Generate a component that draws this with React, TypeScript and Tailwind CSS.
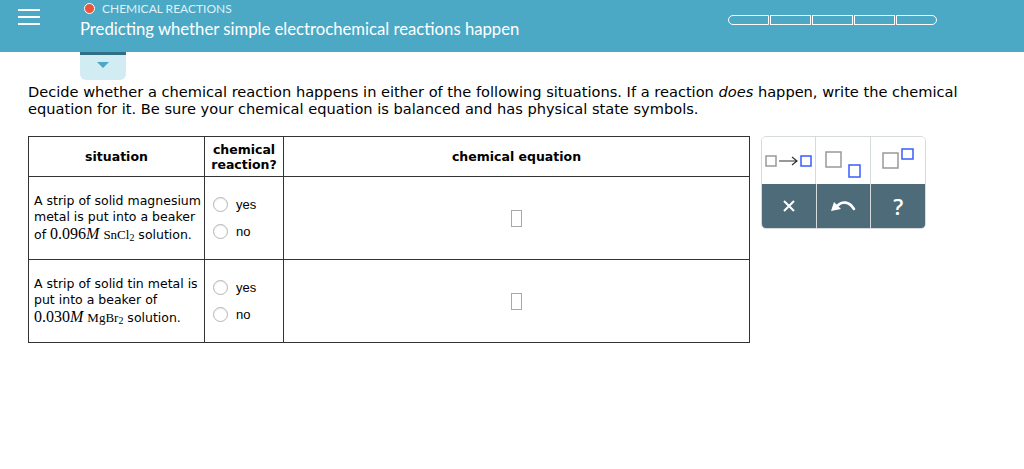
import React from "react";

const verdana = { fontFamily: '"DejaVu Sans", Verdana, sans-serif' };
const serif = { fontFamily: '"Liberation Serif", "Times New Roman", serif' };

function Radio({ label }: { label: string }) {
  return (
    <div className="flex items-center gap-[8px]">
      <span className="h-[15px] w-[15px] rounded-full border border-[#b5b5b5] bg-white shadow-[inset_0_1px_1px_rgba(0,0,0,0.08)]" />
      <span className="text-[13px] leading-[15px] text-black" style={{ fontFamily: '"Liberation Sans", Arial, sans-serif' }}>
        {label}
      </span>
    </div>
  );
}

function Amount({ value, formula, sub }: { value: string; formula: string; sub: string; }) {
  return (
    <span style={serif} className="text-[16px]">
      {value}
      <i>M</i>{" "}
      <span className="text-[13px]">
        {formula}
        <sub className="text-[10px]">{sub}</sub>
      </span>
    </span>
  );
}

function SlotBox() {
  return <span className="block h-[17px] w-[11px] border-[1.5px] border-[#a8a8a8]" />;
}

function Row({ children }: { children: React.ReactNode }) {
  return (
    <tr className="h-[83px]">
      <td className="border-[1.5px] border-[#333] pl-[5px] pr-0 align-middle text-[12.5px] leading-[16.5px] text-black">{children}</td>
      <td className="border-[1.5px] border-[#333] px-[8px]">
        <div className="flex flex-col gap-[12px]">
          <Radio label="yes" />
          <Radio label="no" />
        </div>
      </td>
      <td className="border-[1.5px] border-[#333]">
        <div className="flex justify-center">
          <SlotBox />
        </div>
      </td>
    </tr>
  );
}

export default function App() {
  return (
    <div className="relative h-[469px] w-[1024px] overflow-hidden bg-white">
      {/* top bar */}
      <header className="flex h-[52px] items-stretch bg-[#4ba9c6]">
        <div className="flex w-[80px] flex-col gap-[5px] pl-[18px] pt-[9px]">
          <span className="h-[2px] w-[22px] bg-white" />
          <span className="h-[2px] w-[22px] bg-white" />
          <span className="h-[2px] w-[22px] bg-white" />
        </div>
        <div className="flex flex-1 flex-col" style={{ fontFamily: 'Lato, "Open Sans", sans-serif' }}>
          <div className="mt-[1px] flex items-center gap-[7px] pl-[4px]">
            <span className="h-[11px] w-[11px] rounded-full border border-white bg-[#e8553a]" />
            <span className="text-[12px] leading-[15px] text-[#def1f6]">CHEMICAL REACTIONS</span>
          </div>
          <div className="mt-[3px] text-[16.7px] leading-[20px] text-white">
            Predicting whether simple electrochemical reactions happen
          </div>
        </div>
        <div className="mr-[87px] mt-[15px] flex h-[10px]">
          {[0, 1, 2, 3, 4].map((i) => (
            <span
              key={i}
              className={
                "h-[10px] w-[41px] border-[1.5px] border-white " +
                (i === 0 ? "rounded-l-full " : "") +
                (i === 4 ? "rounded-r-full " : "") +
                (i > 0 ? "ml-[1px]" : "")
              }
            />
          ))}
        </div>
      </header>

      {/* tab */}
      <div className="ml-[80px] flex h-[28px] w-[46px] justify-center rounded-b-[6px] border-t-[3px] border-[#2f6e83] bg-[#d1edf3]">
        <span className="mt-[7px] h-0 w-0 border-x-[6px] border-t-[6px] border-x-transparent border-t-[#4ba9c6]" />
      </div>

      <div className="pl-[28px]" style={verdana}>
        <p className="mt-[3px] w-[960px] text-[14.6px] leading-[17px] text-black">
          Decide whether a chemical reaction happens in either of the following situations. If a reaction <i>does</i> happen, write the chemical equation for it. Be sure your chemical equation is balanced and has physical state symbols.
        </p>

        <table className="mt-[19px] w-[722px] table-fixed border-collapse">
          <thead>
            <tr className="h-[40px] text-[12.5px] font-bold leading-[15px] text-black">
              <th className="w-[176px] border-[1.5px] border-[#333]">situation</th>
              <th className="w-[79px] border-[1.5px] border-[#333]">
                chemical
                <br />
                reaction?
              </th>
              <th className="border-[1.5px] border-[#333]">chemical equation</th>
            </tr>
          </thead>
          <tbody>
            <Row>
              A strip of solid magnesium metal is put into a beaker of{" "}
              <Amount value="0.096" formula="SnCl" sub="2" /> solution.
            </Row>
            <Row>
              A strip of solid tin metal is put into a beaker of{" "}
              <Amount value="0.030" formula="MgBr" sub="2" /> solution.
            </Row>
          </tbody>
        </table>
      </div>

      {/* toolbar */}
      <div className="absolute left-[761px] top-[136px] w-[165px] overflow-hidden rounded-[5px] border border-[#d5dadd]">
        <div className="grid h-[47px] grid-cols-3 bg-white">
          <div className="flex items-center justify-center border-r border-[#d5dadd]">
            <svg width="48" height="14" viewBox="0 0 48 14">
              <rect x="1" y="2" width="10" height="10" fill="none" stroke="#999" strokeWidth="1.5" />
              <path d="M14 7 H32 M27 3 L32 7 L27 11" fill="none" stroke="#333" strokeWidth="1.2" />
              <rect x="36" y="2" width="10" height="10" fill="none" stroke="#3b5bfd" strokeWidth="1.5" />
            </svg>
          </div>
          <div className="flex items-center justify-center border-r border-[#d5dadd]">
            <svg width="36" height="28" viewBox="0 0 36 28" className="translate-y-[4px]">
              <rect x="1" y="1" width="15" height="15" fill="none" stroke="#999" strokeWidth="1.5" />
              <rect x="24" y="14" width="11" height="12" fill="none" stroke="#3b5bfd" strokeWidth="1.5" />
            </svg>
          </div>
          <div className="flex items-center justify-center">
            <svg width="32" height="22" viewBox="0 0 32 22" className="-translate-y-[2px]">
              <rect x="1" y="5" width="15" height="15" fill="none" stroke="#999" strokeWidth="1.5" />
              <rect x="20" y="1" width="11" height="10" fill="none" stroke="#3b5bfd" strokeWidth="1.5" />
            </svg>
          </div>
        </div>
        <div className="grid h-[44px] grid-cols-3 gap-[1px] bg-[#d5dadd]">
          <div className="flex items-center justify-center bg-[#4e6b79]">
            <svg width="14" height="14" viewBox="0 0 14 14">
              <path d="M2 2 L12 12 M12 2 L2 12" stroke="white" strokeWidth="2" />
            </svg>
          </div>
          <div className="flex items-center justify-center bg-[#4e6b79]">
            <svg width="26" height="14" viewBox="0 0 26 14">
              <path d="M7 7 C12 2 19 2 24 10" fill="none" stroke="white" strokeWidth="2.6" strokeLinecap="round" />
              <path d="M1 12 L4 3 L11 10 Z" fill="white" />
            </svg>
          </div>
          <div className="flex items-center justify-center bg-[#4e6b79]">
            <span className="text-[22px] font-semibold leading-none text-white" style={{ fontFamily: '"Open Sans", sans-serif' }}>?</span>
          </div>
        </div>
      </div>
    </div>
  );
}
